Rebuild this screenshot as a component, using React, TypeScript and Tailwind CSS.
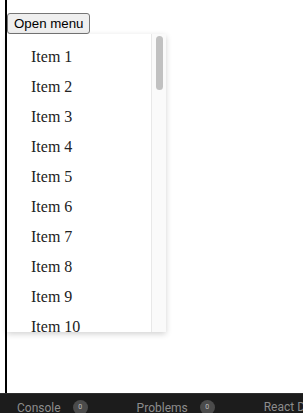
import React from 'react';

const items = Array.from({ length: 10 }, (_, i) => `Item ${i + 1}`);

function Badge() {
  return (
    <span className="ml-[12px] inline-flex h-[15px] w-[15px] items-center justify-center rounded-full bg-[#4b4b4b] text-[7px] leading-none text-[#bdbdbd]">
      0
    </span>
  );
}

export default function App() {
  return (
    <div className="flex h-[413px] w-[303px] flex-col overflow-hidden bg-white">
      <div className="flex flex-1 min-h-0">
        <div className="w-[5px]" />
        <div className="w-[2px] bg-black" />
        <div className="flex flex-col items-start pt-[13px]">
          <button
            className="h-[21px] rounded-[3px] border border-[#767676] bg-[#efefef] px-[6px] text-[13.3px] leading-none text-black"
            style={{ fontFamily: '"Liberation Sans", Arial, sans-serif' }}
          >
            Open menu
          </button>
          <div className="flex h-[298px] w-[159px] overflow-hidden bg-white shadow-[0_2px_6px_rgba(0,0,0,0.18)]">
            <ul
              className="flex-1 overflow-hidden pt-[8px] text-[16px] leading-[30px] text-[#222]"
              style={{ fontFamily: '"Liberation Serif", "Times New Roman", serif' }}
            >
              {items.map((it) => (
                <li key={it} className="pl-[24px]">
                  {it}
                </li>
              ))}
            </ul>
            <div className="w-[15px] border-l border-[#e8e8e8] bg-[#fafafa] pt-[2px]">
              <div className="mx-auto h-[54px] w-[7px] rounded-full bg-[#c1c1c1]" />
            </div>
          </div>
        </div>
      </div>
      <div
        className="flex h-[20px] shrink-0 items-start border-t border-[#2e2e2e] bg-[#1c1c1c] pt-[6px] text-[12px] leading-[14px] text-[#8c8c8c]"
        style={{ fontFamily: 'Roboto, "Liberation Sans", sans-serif' }}
      >
        <div className="ml-[17px] flex items-center">
          Console
          <Badge />
        </div>
        <div className="ml-[49px] flex items-center">
          Problems
          <Badge />
        </div>
        <div className="ml-[49px] whitespace-nowrap">React DevTools</div>
      </div>
    </div>
  );
}
